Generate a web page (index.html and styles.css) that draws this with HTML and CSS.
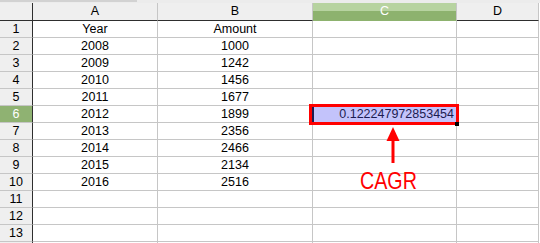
FILE: index.html
```html
<!DOCTYPE html>
<html>
<head>
<meta charset="utf-8">
<link rel="stylesheet" href="styles.css">
</head>
<body>
<div class="topbar"><div class="thumb"></div></div>
<div class="sheet">
  <div class="corner"></div><div class="ch">A</div><div class="ch">B</div><div class="ch sel">C</div><div class="ch">D</div>
  <div class="rh">1</div><div class="c">Year</div><div class="c">Amount</div><div class="c"></div><div class="c"></div>
  <div class="rh">2</div><div class="c">2008</div><div class="c">1000</div><div class="c"></div><div class="c"></div>
  <div class="rh">3</div><div class="c">2009</div><div class="c">1242</div><div class="c"></div><div class="c"></div>
  <div class="rh">4</div><div class="c">2010</div><div class="c">1456</div><div class="c"></div><div class="c"></div>
  <div class="rh">5</div><div class="c">2011</div><div class="c">1677</div><div class="c"></div><div class="c"></div>
  <div class="rh sel">6</div><div class="c">2012</div><div class="c">1899</div><div class="c num">0.122247972853454</div><div class="c"></div>
  <div class="rh">7</div><div class="c">2013</div><div class="c">2356</div><div class="c"></div><div class="c"></div>
  <div class="rh">8</div><div class="c">2014</div><div class="c">2466</div><div class="c"></div><div class="c"></div>
  <div class="rh">9</div><div class="c">2015</div><div class="c">2134</div><div class="c"></div><div class="c"></div>
  <div class="rh">10</div><div class="c">2016</div><div class="c">2516</div><div class="c"></div><div class="c"></div>
  <div class="rh">11</div><div class="c"></div><div class="c"></div><div class="c"></div><div class="c"></div>
  <div class="rh">12</div><div class="c"></div><div class="c"></div><div class="c"></div><div class="c"></div>
  <div class="rh">13</div><div class="c"></div><div class="c"></div><div class="c"></div><div class="c"></div>
  <div class="rh"></div><div class="c"></div><div class="c"></div><div class="c"></div><div class="c"></div>
</div>
<div class="redbox"></div>
<div class="handle"></div>
<svg class="arrow" width="20" height="40" viewBox="0 0 20 40">
  <path d="M10 1 L16.5 15 L3.5 15 Z" fill="#ff0000"/>
  <rect x="8.5" y="13" width="3" height="24" fill="#ff0000"/>
</svg>
<div class="label">CAGR</div>
</body>
</html>
```
FILE: styles.css
```css
html, body {
  margin: 0;
  padding: 0;
  background: #ffffff;
  overflow: hidden;
}
body {
  position: relative;
  width: 540px;
  height: 243px;
}
.topbar {
  height: 3px;
  background: #ececec;
  display: flex;
}
.thumb {
  width: 137px;
  height: 2px;
  background: #d2d2d2;
}
.sheet {
  display: grid;
  grid-template-columns: 33px 125px 155px 144px 82px;
  grid-template-rows: 18px;
  grid-auto-rows: 17px;
}
.sheet > div {
  box-sizing: border-box;
  border-right: 1px solid #c6c6c6;
  border-bottom: 1px solid #c6c6c6;
  font-family: "Liberation Sans", Arial, sans-serif;
  font-size: 12.5px;
  line-height: 17px;
  text-align: center;
  color: #000;
  white-space: nowrap;
}
.corner {
  background: #efefef;
  border-right-color: #2e2e2e !important;
  border-bottom-color: #2e2e2e !important;
}
.ch {
  background: #efefef;
  color: #333;
  border-bottom-color: #2e2e2e !important;
}
.ch.sel {
  background: linear-gradient(#b7d3a0 0, #b7d3a0 50%, #8db26e 50%, #8db26e 100%);
  color: #ffffff;
  border-bottom-color: #8db26e !important;
}
.rh {
  background: #efefef;
  color: #333;
  border-right-color: #2e2e2e !important;
}
.rh.sel {
  background: #8fb272;
  color: #ffffff;
}
.num {
  text-align: right !important;
  padding-right: 2px;
  background: #c3c3fb;
  color: #1c1c52 !important;
}
.redbox {
  position: absolute;
  left: 309px;
  top: 104px;
  width: 150px;
  height: 21px;
  box-sizing: border-box;
  border: 3px solid #ff0000;
  box-shadow: inset 2px 0 0 #1c1c52;
}
.handle {
  position: absolute;
  left: 455px;
  top: 122px;
  width: 4px;
  height: 4px;
  background: #000;
}
.arrow {
  position: absolute;
  left: 383px;
  top: 126px;
}
.label {
  position: absolute;
  left: 360px;
  top: 167px;
  font-family: "Liberation Sans", Arial, sans-serif;
  font-size: 24px;
  line-height: 28px;
  color: #ff0000;
  transform: scaleX(0.82);
  transform-origin: 0 0;
}
```
